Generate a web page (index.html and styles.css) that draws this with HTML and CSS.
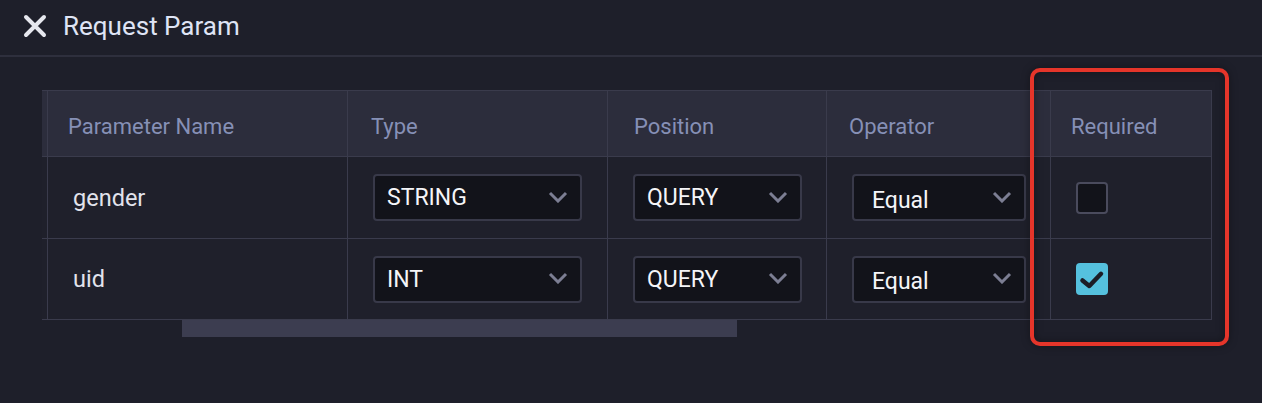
FILE: index.html
```html
<!DOCTYPE html>
<html lang="en">
<head>
    <meta charset="UTF-8">
    <meta name="viewport" content="width=device-width, initial-scale=1.0">
    <title>Request Param</title>
    <link rel="stylesheet" href="styles.css">
</head>
<body>
    <header class="dialog-header">
        <svg class="close-icon" viewBox="0 0 24 24" width="24" height="24">
            <path d="M3 3 L21 21 M21 3 L3 21" stroke="#e6e7ee" stroke-width="4" stroke-linecap="round"/>
        </svg>
        <span class="dialog-title">Request Param</span>
    </header>

    <main class="dialog-body">
        <div class="table-wrap">
            <div class="param-table">
                <div class="row head">
                    <div class="cell">Parameter Name</div>
                    <div class="cell">Type</div>
                    <div class="cell">Position</div>
                    <div class="cell">Operator</div>
                    <div class="cell">Required</div>
                </div>
                <div class="row">
                    <div class="cell name">gender</div>
                    <div class="cell"><div class="select type-select"><span>STRING</span><svg class="chevron" viewBox="0 0 20 12"><path d="M2 2 L10 10 L18 2" fill="none" stroke="#7c7e93" stroke-width="3"/></svg></div></div>
                    <div class="cell"><div class="select pos-select"><span>QUERY</span><svg class="chevron" viewBox="0 0 20 12"><path d="M2 2 L10 10 L18 2" fill="none" stroke="#7c7e93" stroke-width="3"/></svg></div></div>
                    <div class="cell"><div class="select op-select"><span>Equal</span><svg class="chevron" viewBox="0 0 20 12"><path d="M2 2 L10 10 L18 2" fill="none" stroke="#7c7e93" stroke-width="3"/></svg></div></div>
                    <div class="cell"><div class="checkbox"></div></div>
                </div>
                <div class="row last">
                    <div class="cell name">uid</div>
                    <div class="cell"><div class="select type-select"><span>INT</span><svg class="chevron" viewBox="0 0 20 12"><path d="M2 2 L10 10 L18 2" fill="none" stroke="#7c7e93" stroke-width="3"/></svg></div></div>
                    <div class="cell"><div class="select pos-select"><span>QUERY</span><svg class="chevron" viewBox="0 0 20 12"><path d="M2 2 L10 10 L18 2" fill="none" stroke="#7c7e93" stroke-width="3"/></svg></div></div>
                    <div class="cell"><div class="select op-select"><span>Equal</span><svg class="chevron" viewBox="0 0 20 12"><path d="M2 2 L10 10 L18 2" fill="none" stroke="#7c7e93" stroke-width="3"/></svg></div></div>
                    <div class="cell">
                        <div class="checkbox checked">
                            <svg viewBox="0 0 32 32" width="32" height="32"><path d="M6.5 17.5 L13.3 23 L25 10.8" fill="none" stroke="#1c1d26" stroke-width="4.5" stroke-linecap="round" stroke-linejoin="round"/></svg>
                        </div>
                    </div>
                </div>
            </div>
            <div class="scrollbar"><div class="thumb"></div></div>
        </div>
        <div class="highlight-box"></div>
    </main>
</body>
</html>
```

FILE: styles.css
```css
body {
    margin: 0;
    background-color: #1e1f2a;
    font-family: Roboto, "Liberation Sans", Arial, sans-serif;
    color: #e4e5ee;
    height: 403px;
    overflow: hidden;
}
.dialog-header {
    height: 57px;
    box-sizing: border-box;
    border-bottom: 2px solid #2e2f3d;
    display: flex;
    align-items: center;
    padding-left: 23px;
    padding-bottom: 3px;
}
.close-icon {
    display: block;
}
.dialog-title {
    margin-left: 16px;
    font-size: 26px;
    color: #dfe4f5;
}
.dialog-body {
    position: relative;
    padding: 33px 0 0 42px;
}
.table-wrap {
    width: 1170px;
}
.param-table {
    border-top: 1px solid #3a3b4c;
}
.row {
    display: grid;
    grid-template-columns: 5px 301px 260px 219px 224px 161px;
    height: 82px;
    background-color: #1f202b;
}
.row::before {
    content: "";
    border-bottom: 1px solid #3a3b4c;
}
.row.head {
    height: 66px;
    background-color: #2c2d3c;
}
.row.last {
    height: 81px;
}
.cell {
    box-sizing: border-box;
    border-right: 1px solid #3a3b4c;
    border-bottom: 1px solid #3a3b4c;
    display: flex;
    align-items: center;
    padding-left: 25px;
}
.cell:first-of-type {
    border-left: 1px solid #3a3b4c;
}
.head .cell {
    padding-top: 6px;
    font-size: 22px;
    color: #8690b6;
}
.head .cell:nth-child(1) { padding-left: 20px; }
.head .cell:nth-child(2) { padding-left: 23px; }
.head .cell:nth-child(3) { padding-left: 26px; }
.head .cell:nth-child(4) { padding-left: 22px; }
.head .cell:nth-child(5) { padding-left: 20px; }
.cell.name {
    padding-left: 25px;
    font-size: 23.5px;
    color: #e2e3ec;
}
.select {
    box-sizing: border-box;
    height: 47px;
    background-color: #12131a;
    border: 2px solid #383949;
    border-radius: 4px;
    display: flex;
    align-items: center;
    justify-content: space-between;
    padding: 0 12px 0 12px;
    font-size: 23px;
    color: #f5f5f8;
}
.type-select {
    width: 209px;
}
.pos-select {
    width: 169px;
}
.op-select {
    width: 174px;
    padding-left: 18px;
}
.op-select span {
    padding-top: 5px;
}
.chevron {
    width: 20px;
    height: 12px;
    margin-bottom: 2px;
}
.checkbox {
    box-sizing: border-box;
    width: 32px;
    height: 32px;
    border: 2px solid #4a4b5d;
    border-radius: 4px;
    background-color: #12131a;
}
.checkbox.checked {
    border: none;
    background-color: #55c1de;
}
.checkbox svg {
    display: block;
}
.scrollbar {
    height: 17px;
    padding-left: 140px;
}
.thumb {
    width: 555px;
    height: 17px;
    background-color: #3c3d50;
}
.highlight-box {
    position: absolute;
    left: 1030px;
    top: 11px;
    width: 199px;
    height: 278px;
    box-sizing: border-box;
    border: 4px solid #e5352a;
    border-radius: 10px;
    box-shadow: 0 0 8px rgba(0, 0, 0, 0.35), inset 0 0 8px rgba(0, 0, 0, 0.35);
}
```
